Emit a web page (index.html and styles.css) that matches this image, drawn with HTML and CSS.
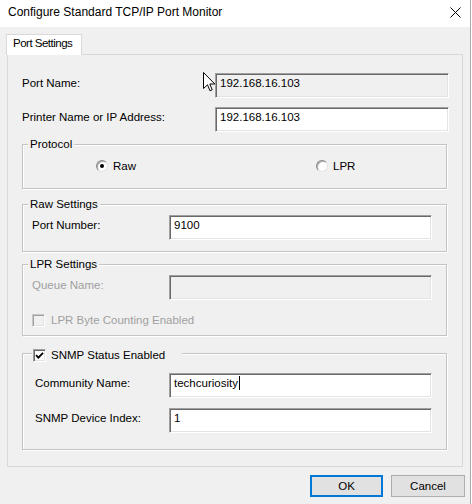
FILE: index.html
```html
<!DOCTYPE html>
<html>
<head>
<meta charset="utf-8">
<title>Configure Standard TCP/IP Port Monitor</title>
<link rel="stylesheet" href="styles.css">
</head>
<body>
<div class="win">
  <div class="titlebar">
    <span class="title">Configure Standard TCP/IP Port Monitor</span>
    <svg class="close" width="11" height="11" viewBox="0 0 11 11"><path d="M0.5 0.5 L10.5 10.5 M10.5 0.5 L0.5 10.5" stroke="#000" stroke-width="1" fill="none"/></svg>
  </div>
  <div class="client">
    <div class="tabs"><div class="tab">Port Settings</div></div>
    <div class="panel">
      <div class="row r-first">
        <span class="lbl w-top">Port Name:</span>
        <div class="edit ro w-topedit">192.168.16.103</div>
      </div>
      <div class="row r-second">
        <span class="lbl w-top">Printer Name or IP Address:</span>
        <div class="edit w-topedit">192.168.16.103</div>
      </div>

      <div class="group g-proto">
        <span class="legend">Protocol</span>
        <div class="radios">
          <div class="radio r-raw"><span class="rb on"></span><span>Raw</span></div>
          <div class="radio"><span class="rb"></span><span>LPR</span></div>
        </div>
      </div>

      <div class="group g-raw">
        <span class="legend">Raw Settings</span>
        <div class="row grow">
          <span class="lbl w-g">Port Number:</span>
          <div class="edit w-gedit">9100</div>
        </div>
      </div>

      <div class="group g-lpr">
        <span class="legend">LPR Settings</span>
        <div class="row grow">
          <span class="lbl w-g dis">Queue Name:</span>
          <div class="edit disabled w-gedit"></div>
        </div>
        <div class="check c-lpr"><span class="cb dis-cb"></span><span class="dis">LPR Byte Counting Enabled</span></div>
      </div>

      <div class="group g-snmp">
        <span class="legend legend-check">
          <span class="cb"><svg width="11" height="11" viewBox="0 0 11 11"><path d="M2 5.2 L4.4 7.6 L9 2.8" stroke="#000" stroke-width="1.8" fill="none"/></svg></span>
          <span>SNMP Status Enabled</span>
        </span>
        <div class="row srow s-first">
          <span class="lbl w-s">Community Name:</span>
          <div class="edit w-gedit">techcuriosity<span class="caret"></span></div>
        </div>
        <div class="row srow s-second">
          <span class="lbl w-s">SNMP Device Index:</span>
          <div class="edit w-gedit">1</div>
        </div>
      </div>
    </div>
    <div class="buttons">
      <button class="btn ok">OK</button>
      <button class="btn cancel">Cancel</button>
    </div>
  </div>
  <svg class="cursor" width="13" height="20" viewBox="0 0 13 20"><path d="M0.5 0.5 V16.5 L4.5 12.8 L7 18.8 L9.2 17.8 L6.8 12 H11.8 Z" fill="#fff" stroke="#000" stroke-width="1" stroke-linejoin="miter"/></svg>
</div>
</body>
</html>
```

FILE: styles.css
```css
body {
  margin: 0;
  background: #fff;
  font-family: "Liberation Sans", Arial, sans-serif;
  color: #000;
}

.win {
  position: relative;
  width: 470px;
  height: 504px;
  border-right: 1px solid #aaaaaa;
  background: #f0f0f0;
  display: flex;
  flex-direction: column;
}

.titlebar {
  box-sizing: border-box;
  height: 27px;
  background: #fff;
  display: flex;
  align-items: flex-start;
  padding: 4px 9px 0 8px;
}

.title {
  font-size: 12px;
  line-height: 16px;
}

.close {
  margin-left: auto;
  margin-top: 3px;
  display: block;
}

.client {
  flex: 1;
  padding: 7px 5px 0 6px;
}

.tabs {
  display: flex;
  height: 21px;
  margin-bottom: -1px;
}

.tab {
  position: relative;
  z-index: 1;
  box-sizing: border-box;
  width: 76px;
  height: 21px;
  border: 1px solid #d9d9d9;
  border-bottom: 0;
  background: #fff;
  padding: 0 0 0 6px;
  font-size: 11.5px;
  line-height: 16px;
  letter-spacing: -0.5px;
}

.panel {
  box-sizing: border-box;
  margin-left: 1px;
  width: 456px;
  height: 413px;
  border: 1px solid #d9d9d9;
  padding: 18px 0 0 14px;
  display: flex;
  flex-direction: column;
  font-size: 11.5px;
}

.row {
  display: flex;
  align-items: flex-start;
  height: 25px;
}

.r-second { margin-top: 9px; }

.lbl {
  padding-top: 3px;
  line-height: 14px;
  white-space: nowrap;
}

.w-top { width: 193px; }
.w-topedit { width: 234px; }
.w-g { width: 137px; }
.w-s { width: 134px; }
.w-gedit { width: 263px; }

.edit {
  box-sizing: border-box;
  height: 25px;
  border-style: solid;
  border-width: 1px;
  border-color: #a0a0a0 #ffffff #ffffff #a0a0a0;
  box-shadow: inset 1px 1px 0 #696969, inset -1px -1px 0 #e3e3e3;
  padding: 2px 0 0 4px;
  line-height: 14px;
  background: #fff;
  white-space: nowrap;
}

.edit.ro,
.edit.disabled {
  background: #f0f0f0;
}

.caret {
  display: inline-block;
  width: 1px;
  height: 14px;
  margin-left: 1px;
  background: #000;
  vertical-align: top;
}

.group {
  box-sizing: border-box;
  width: 425px;
  border: 1px solid #c4c4c4;
  box-shadow: inset 1px 1px 0 #fff, 1px 1px 0 #fff;
  display: flex;
  flex-direction: column;
}

.legend {
  align-self: flex-start;
  margin: -8px 0 0 5px;
  padding: 0 2px;
  height: 14px;
  line-height: 14px;
  background: #f0f0f0;
  white-space: nowrap;
}

.legend-check {
  display: flex;
  align-items: center;
  gap: 5px;
  margin: -6px 0 0 9px;
  padding: 0 17px 0 1px;
}

.g-proto { margin-top: 12px; height: 45px; }
.g-raw { margin-top: 15px; height: 48px; }
.g-lpr { margin-top: 12px; height: 72px; }
.g-snmp { margin-top: 17px; height: 97px; }

.radios {
  display: flex;
  margin-top: 8px;
  padding-left: 73px;
}

.radio {
  display: flex;
  align-items: center;
  gap: 5px;
  line-height: 14px;
}

.r-raw { width: 220px; }

.rb {
  box-sizing: border-box;
  width: 12px;
  height: 12px;
  border-radius: 50%;
  border: 1px solid;
  border-color: #8a8a8a #e3e3e3 #e3e3e3 #8a8a8a;
  box-shadow: inset 1px 1px 0 #a8a8a8;
  background: #fff;
  display: flex;
  align-items: center;
  justify-content: center;
}

.rb.on::after {
  content: "";
  width: 4px;
  height: 4px;
  border-radius: 50%;
  background: #000;
}

.grow {
  margin-top: 4px;
  padding-left: 9px;
}

.check {
  display: flex;
  align-items: center;
  gap: 6px;
  line-height: 14px;
  margin-top: 13px;
  padding-left: 9px;
}

.cb {
  box-sizing: border-box;
  width: 13px;
  height: 13px;
  border: 1px solid;
  border-color: #a0a0a0 #ffffff #ffffff #a0a0a0;
  box-shadow: inset 1px 1px 0 #696969, inset -1px -1px 0 #e3e3e3;
  background: #fff;
  display: flex;
}

.cb svg { display: block; }

.cb.dis-cb {
  background: #f0f0f0;
  border-color: #c8c8c8 #ffffff #ffffff #c8c8c8;
  box-shadow: inset 1px 1px 0 #a0a0a0, inset -1px -1px 0 #e3e3e3;
}

.dis { color: #a0a0a0; }

.srow { padding-left: 12px; }
.s-first { margin-top: 11px; }
.s-second { margin-top: 10px; }

.buttons {
  display: flex;
  justify-content: flex-end;
  gap: 8px;
  margin-top: 8px;
}

.btn {
  box-sizing: border-box;
  height: 22px;
  padding: 0;
  background: #e1e1e1;
  border: 1px solid #adadad;
  font-family: "Liberation Sans", Arial, sans-serif;
  font-size: 11.5px;
  color: #000;
}

.ok {
  width: 73px;
  border-color: #0078d7;
  box-shadow: inset 0 0 0 1px #0078d7;
}

.cancel { width: 74px; }

.cursor {
  position: absolute;
  left: 203px;
  top: 72px;
}
```
